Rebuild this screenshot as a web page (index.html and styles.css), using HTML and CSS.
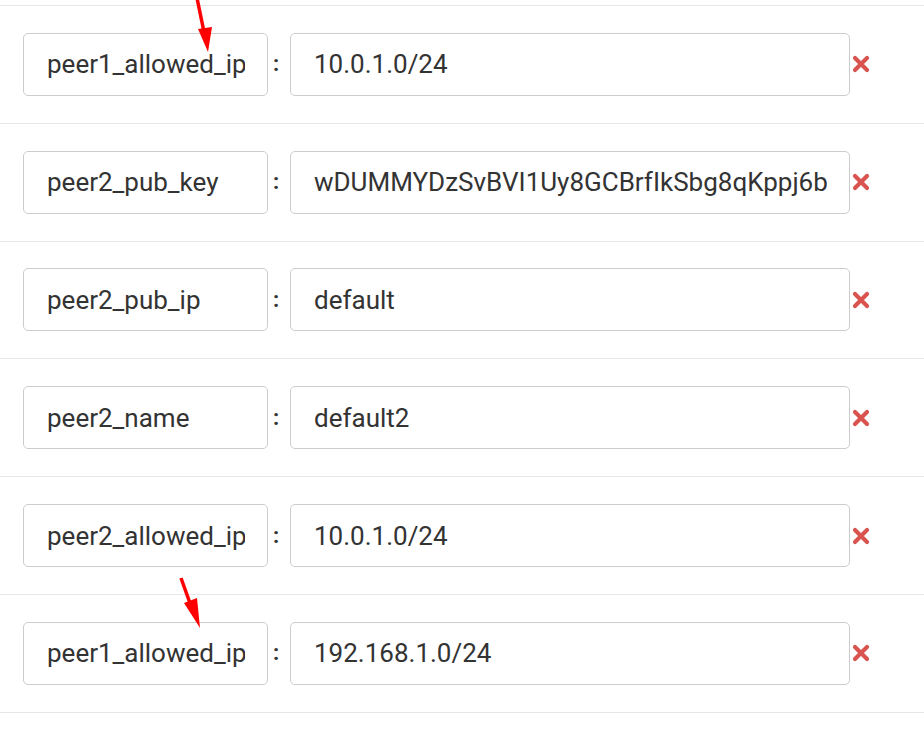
FILE: index.html
```html
<!DOCTYPE html>
<html>
<head>
<meta charset="utf-8">
<link rel="stylesheet" href="styles.css">
</head>
<body>
<div class="list">
  <div class="row">
    <input class="key" value="peer1_allowed_ip"><span class="colon">:</span><input class="val" value="10.0.1.0/24"><span class="del"><svg viewBox="0 0 18 18" width="18" height="18"><path d="M3 3L15 15M15 3L3 15" stroke="#d9534f" stroke-width="4.2" stroke-linecap="round"/></svg></span>
  </div>
  <div class="row">
    <input class="key" value="peer2_pub_key"><span class="colon">:</span><input class="val" value="wDUMMYDzSvBVI1Uy8GCBrfIkSbg8qKppj6bSYrhzWvv="><span class="del"><svg viewBox="0 0 18 18" width="18" height="18"><path d="M3 3L15 15M15 3L3 15" stroke="#d9534f" stroke-width="4.2" stroke-linecap="round"/></svg></span>
  </div>
  <div class="row">
    <input class="key" value="peer2_pub_ip"><span class="colon">:</span><input class="val" value="default"><span class="del"><svg viewBox="0 0 18 18" width="18" height="18"><path d="M3 3L15 15M15 3L3 15" stroke="#d9534f" stroke-width="4.2" stroke-linecap="round"/></svg></span>
  </div>
  <div class="row">
    <input class="key" value="peer2_name"><span class="colon">:</span><input class="val" value="default2"><span class="del"><svg viewBox="0 0 18 18" width="18" height="18"><path d="M3 3L15 15M15 3L3 15" stroke="#d9534f" stroke-width="4.2" stroke-linecap="round"/></svg></span>
  </div>
  <div class="row">
    <input class="key" value="peer2_allowed_ip"><span class="colon">:</span><input class="val" value="10.0.1.0/24"><span class="del"><svg viewBox="0 0 18 18" width="18" height="18"><path d="M3 3L15 15M15 3L3 15" stroke="#d9534f" stroke-width="4.2" stroke-linecap="round"/></svg></span>
  </div>
  <div class="row last">
    <input class="key" value="peer1_allowed_ip"><span class="colon">:</span><input class="val" value="192.168.1.0/24"><span class="del"><svg viewBox="0 0 18 18" width="18" height="18"><path d="M3 3L15 15M15 3L3 15" stroke="#d9534f" stroke-width="4.2" stroke-linecap="round"/></svg></span>
  </div>
  <svg class="arrows" width="924" height="734" viewBox="0 0 924 734">
    <line x1="197" y1="-2" x2="204" y2="32" stroke="#f00" stroke-width="3.5"/>
    <polygon points="198,29 212,27 208,52" fill="#f00"/>
    <line x1="181" y1="578" x2="191" y2="606" stroke="#f00" stroke-width="3.5"/>
    <polygon points="184,603 197,598 200,628" fill="#f00"/>
  </svg>
</div>
</body>
</html>
```

FILE: styles.css
```css
html, body {
  margin: 0;
  padding: 0;
  background: #fff;
}
body {
  font-family: Roboto, "Liberation Sans", sans-serif;
  color: #333;
}
.list {
  position: relative;
  padding-top: 5px;
  width: 924px;
  height: 734px;
  overflow: hidden;
}
.row {
  display: flex;
  align-items: center;
  height: 116.8px;
  border-top: 1px solid #e6e6e6;
  padding-left: 23px;
}
.row.last {
  border-bottom: 1px solid #e6e6e6;
}
.key, .val {
  box-sizing: border-box;
  height: 63px;
  border: 1px solid #cccccc;
  border-radius: 5px;
  padding: 0 22px 0 23px;
  font-family: Roboto, "Liberation Sans", sans-serif;
  font-size: 26px;
  color: #333;
  background: #fff;
  outline: none;
  margin: 0;
}
.key {
  width: 245px;
}
.val {
  width: 560px;
}
.colon {
  box-sizing: border-box;
  width: 22px;
  padding-left: 5px;
  text-align: left;
  font-size: 22px;
  font-weight: bold;
  color: #333;
  line-height: 1;
}
.del {
  display: flex;
  align-items: center;
  margin-left: 2px;
}
.arrows {
  position: absolute;
  left: 0;
  top: 0;
  pointer-events: none;
}
```
